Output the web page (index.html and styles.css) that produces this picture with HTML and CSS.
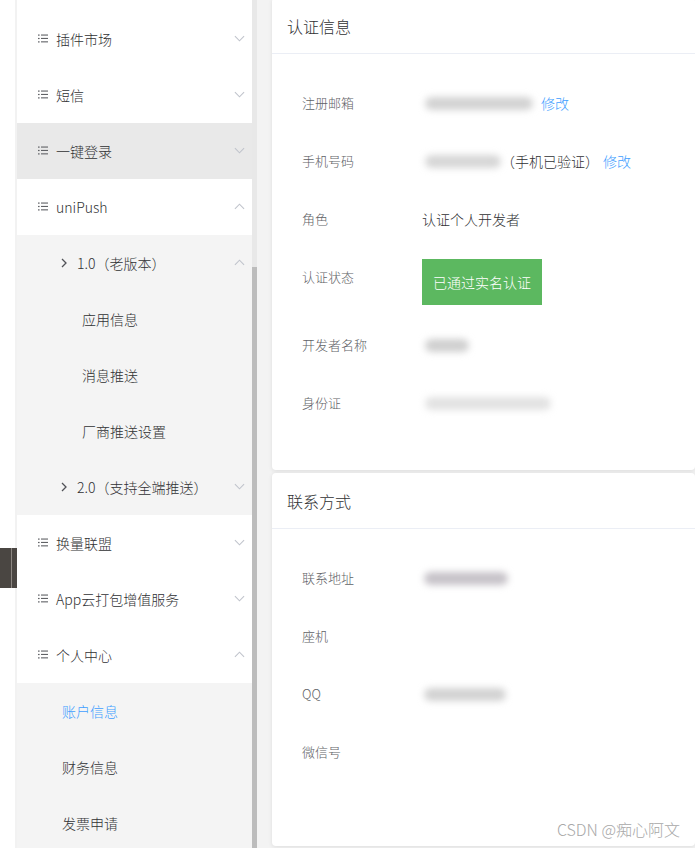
FILE: index.html
```html
<!DOCTYPE html>
<html lang="zh-CN">
<head>
<meta charset="utf-8">
<title>账户信息</title>
<link rel="stylesheet" href="styles.css">
</head>
<body>
<div class="page">
  <div class="gutter"></div>
  <nav class="sidebar">
    <ul class="menu">
      <li class="item"><svg class="ico-list" viewBox="0 0 10 9"><rect x="0" y="0.5" width="1.6" height="1.2"/><rect x="0" y="3.9" width="1.6" height="1.2"/><rect x="0" y="7.3" width="1.6" height="1.2"/><rect x="3" y="0.5" width="7" height="1.1"/><rect x="3" y="3.9" width="7" height="1.1"/><rect x="3" y="7.3" width="7" height="1.1"/></svg><span>插件市场</span><svg class="chev" viewBox="0 0 12 7"><path d="M1 1 L6 6 L11 1"/></svg></li>
      <li class="item"><svg class="ico-list" viewBox="0 0 10 9"><rect x="0" y="0.5" width="1.6" height="1.2"/><rect x="0" y="3.9" width="1.6" height="1.2"/><rect x="0" y="7.3" width="1.6" height="1.2"/><rect x="3" y="0.5" width="7" height="1.1"/><rect x="3" y="3.9" width="7" height="1.1"/><rect x="3" y="7.3" width="7" height="1.1"/></svg><span>短信</span><svg class="chev" viewBox="0 0 12 7"><path d="M1 1 L6 6 L11 1"/></svg></li>
      <li class="item hl"><svg class="ico-list" viewBox="0 0 10 9"><rect x="0" y="0.5" width="1.6" height="1.2"/><rect x="0" y="3.9" width="1.6" height="1.2"/><rect x="0" y="7.3" width="1.6" height="1.2"/><rect x="3" y="0.5" width="7" height="1.1"/><rect x="3" y="3.9" width="7" height="1.1"/><rect x="3" y="7.3" width="7" height="1.1"/></svg><span>一键登录</span><svg class="chev" viewBox="0 0 12 7"><path d="M1 1 L6 6 L11 1"/></svg></li>
      <li class="item"><svg class="ico-list" viewBox="0 0 10 9"><rect x="0" y="0.5" width="1.6" height="1.2"/><rect x="0" y="3.9" width="1.6" height="1.2"/><rect x="0" y="7.3" width="1.6" height="1.2"/><rect x="3" y="0.5" width="7" height="1.1"/><rect x="3" y="3.9" width="7" height="1.1"/><rect x="3" y="7.3" width="7" height="1.1"/></svg><span>uniPush</span><svg class="chev" viewBox="0 0 12 7"><path d="M1 6 L6 1 L11 6"/></svg></li>
      <li class="sub">
        <ul class="menu-sub">
          <li class="item lv2"><svg class="arrow" viewBox="0 0 6 10"><path d="M1 1 L5 5 L1 9"/></svg><span>1.0（老版本）</span><svg class="chev" viewBox="0 0 12 7"><path d="M1 6 L6 1 L11 6"/></svg></li>
          <li class="item lv3"><span>应用信息</span></li>
          <li class="item lv3"><span>消息推送</span></li>
          <li class="item lv3"><span>厂商推送设置</span></li>
          <li class="item lv2"><svg class="arrow" viewBox="0 0 6 10"><path d="M1 1 L5 5 L1 9"/></svg><span>2.0（支持全端推送）</span><svg class="chev" viewBox="0 0 12 7"><path d="M1 1 L6 6 L11 1"/></svg></li>
        </ul>
      </li>
      <li class="item"><svg class="ico-list" viewBox="0 0 10 9"><rect x="0" y="0.5" width="1.6" height="1.2"/><rect x="0" y="3.9" width="1.6" height="1.2"/><rect x="0" y="7.3" width="1.6" height="1.2"/><rect x="3" y="0.5" width="7" height="1.1"/><rect x="3" y="3.9" width="7" height="1.1"/><rect x="3" y="7.3" width="7" height="1.1"/></svg><span>换量联盟</span><svg class="chev" viewBox="0 0 12 7"><path d="M1 1 L6 6 L11 1"/></svg></li>
      <li class="item"><svg class="ico-list" viewBox="0 0 10 9"><rect x="0" y="0.5" width="1.6" height="1.2"/><rect x="0" y="3.9" width="1.6" height="1.2"/><rect x="0" y="7.3" width="1.6" height="1.2"/><rect x="3" y="0.5" width="7" height="1.1"/><rect x="3" y="3.9" width="7" height="1.1"/><rect x="3" y="7.3" width="7" height="1.1"/></svg><span>App云打包增值服务</span><svg class="chev" viewBox="0 0 12 7"><path d="M1 1 L6 6 L11 1"/></svg></li>
      <li class="item"><svg class="ico-list" viewBox="0 0 10 9"><rect x="0" y="0.5" width="1.6" height="1.2"/><rect x="0" y="3.9" width="1.6" height="1.2"/><rect x="0" y="7.3" width="1.6" height="1.2"/><rect x="3" y="0.5" width="7" height="1.1"/><rect x="3" y="3.9" width="7" height="1.1"/><rect x="3" y="7.3" width="7" height="1.1"/></svg><span>个人中心</span><svg class="chev" viewBox="0 0 12 7"><path d="M1 6 L6 1 L11 6"/></svg></li>
      <li class="sub">
        <ul class="menu-sub">
          <li class="item lv2b active"><span>账户信息</span></li>
          <li class="item lv2b"><span>财务信息</span></li>
          <li class="item lv2b"><span>发票申请</span></li>
        </ul>
      </li>
    </ul>
  </nav>
  <div class="scroll"><div class="thumb"></div></div>
  <main class="main">
    <section class="card card-auth">
      <header class="card-head">认证信息</header>
      <div class="card-body">
        <div class="row"><div class="label">注册邮箱</div><div class="value"><span class="smudge w-email"></span><a class="link">修改</a></div></div>
        <div class="row"><div class="label">手机号码</div><div class="value"><span class="smudge w-phone"></span><span class="phone-note">（手机已验证）</span><a class="link">修改</a></div></div>
        <div class="row"><div class="label">角色</div><div class="value">认证个人开发者</div></div>
        <div class="row row-status"><div class="label">认证状态</div><div class="value"><span class="badge">已通过实名认证</span></div></div>
        <div class="row"><div class="label">开发者名称</div><div class="value"><span class="smudge w-name"></span></div></div>
        <div class="row"><div class="label">身份证</div><div class="value"><span class="smudge w-id"></span></div></div>
      </div>
    </section>
    <section class="card card-contact">
      <header class="card-head">联系方式</header>
      <div class="card-body">
        <div class="row"><div class="label">联系地址</div><div class="value"><span class="smudge w-addr"></span></div></div>
        <div class="row"><div class="label">座机</div><div class="value"></div></div>
        <div class="row"><div class="label">QQ</div><div class="value"><span class="smudge w-qq"></span></div></div>
        <div class="row"><div class="label">微信号</div><div class="value"></div></div>
      </div>
      <div class="watermark">CSDN @痴心阿文</div>
    </section>
  </main>
</div>
<div class="dark-tab"></div>
</body>
</html>
```

FILE: styles.css
```css
html, body {
  margin: 0;
  padding: 0;
  height: 848px;
  overflow: hidden;
  background: #ffffff;
  font-family: "Noto Sans CJK SC", "Microsoft YaHei", sans-serif;
}

.page {
  display: flex;
  height: 848px;
}

.gutter {
  width: 15px;
  flex: none;
  background: #ffffff;
  border-right: 2px solid #f2f2f2;
}

.sidebar {
  width: 235px;
  flex: none;
  background: #ffffff;
  overflow: hidden;
}

.menu, .menu-sub {
  list-style: none;
  margin: 0;
  padding: 0;
}

.menu {
  padding-top: 11px;
}

.item {
  box-sizing: border-box;
  display: flex;
  align-items: center;
  height: 56px;
  padding-left: 21px;
  padding-bottom: 1px;
  font-size: 14px;
  font-weight: 300;
  color: #303133;
  white-space: nowrap;
}

.item.hl {
  background: #e9e9e9;
}

.sub {
  background: #f4f4f4;
}

.ico-list {
  width: 10px;
  height: 9px;
  margin-right: 8px;
  fill: #606266;
  flex: none;
}

.chev {
  width: 11px;
  height: 7px;
  margin-left: auto;
  margin-right: 7px;
  fill: none;
  stroke: #c0c4cc;
  stroke-width: 1.2;
  flex: none;
}

.arrow {
  width: 6px;
  height: 10px;
  margin-right: 10px;
  fill: none;
  stroke: #505257;
  stroke-width: 1.3;
  flex: none;
}

.item.lv2 {
  padding-left: 44px;
}

.item.lv3 {
  padding-left: 65px;
}

.item.lv2b {
  padding-left: 45px;
}

.item.active {
  color: #409eff;
}

.scroll {
  width: 5px;
  flex: none;
  background: #e8e8e8;
  display: flex;
  flex-direction: column;
}

.thumb {
  margin-top: 267px;
  flex: 1;
  background: #bcbcbc;
}

.main {
  flex: 1;
  background: #f3f3f3;
  padding-left: 15px;
  min-width: 0;
}

.card {
  position: relative;
  background: #ffffff;
  border-radius: 4px;
  box-shadow: 0 1px 4px rgba(0, 0, 0, 0.09);
  margin-bottom: 3px;
}

.card-auth {
  margin-top: -2px;
}

.card-head {
  height: 55px;
  line-height: 56px;
  padding: 0 15px;
  font-size: 16px;
  font-weight: 300;
  color: #303133;
  border-bottom: 1px solid #ebeef5;
}

.card-body {
  padding: 29px 30px 29px;
}

.card-contact .card-body {
  padding-bottom: 56px;
}

.row {
  display: flex;
  height: 40px;
  margin-bottom: 18px;
}

.row-status {
  height: 50px;
}

.label {
  width: 120px;
  flex: none;
  font-size: 13px;
  font-weight: 300;
  line-height: 40px;
  color: #606266;
}

.value {
  display: flex;
  align-items: center;
  height: 40px;
  font-size: 14px;
  font-weight: 300;
  color: #303133;
  white-space: nowrap;
}

.row-status .value {
  align-items: flex-start;
  height: 50px;
}

.badge {
  display: inline-block;
  margin-top: 2px;
  height: 46px;
  line-height: 46px;
  padding: 0 11px;
  background: #5cb860;
  color: #ffffff;
  font-size: 14px;
}

.smudge {
  display: inline-block;
  height: 13px;
  border-radius: 7px;
  background: #c8c8c8;
  filter: blur(3.5px);
}

.w-email { width: 108px; margin-left: 3px; margin-right: 8px; background: #d2d2d2; }
.w-phone { width: 76px; margin-left: 3px; background: #d6d6d6; }
.w-name { width: 44px; margin-left: 3px; background: #cfcfcf; }
.w-id { width: 126px; margin-left: 3px; background: #e2e2e2; }
.w-addr { width: 84px; margin-left: 2px; background: #c6c2c8; }
.w-qq { width: 82px; margin-left: 2px; background: #d2d2d2; }

.phone-note {
  color: #303133;
}

.link {
  color: #409eff;
  font-size: 14px;
}

.phone-note + .link {
  margin-left: 4px;
}

.watermark {
  position: absolute;
  right: 15px;
  bottom: 5px;
  font-size: 16px;
  font-weight: 300;
  color: #a8a8a8;
}

.dark-tab {
  position: absolute;
  left: 0;
  top: 548px;
  width: 17px;
  height: 40px;
  background: #4a4642;
  box-shadow: inset -5px 0 0 #4a4642, inset -6px 0 0 #8c8782;
}
```
